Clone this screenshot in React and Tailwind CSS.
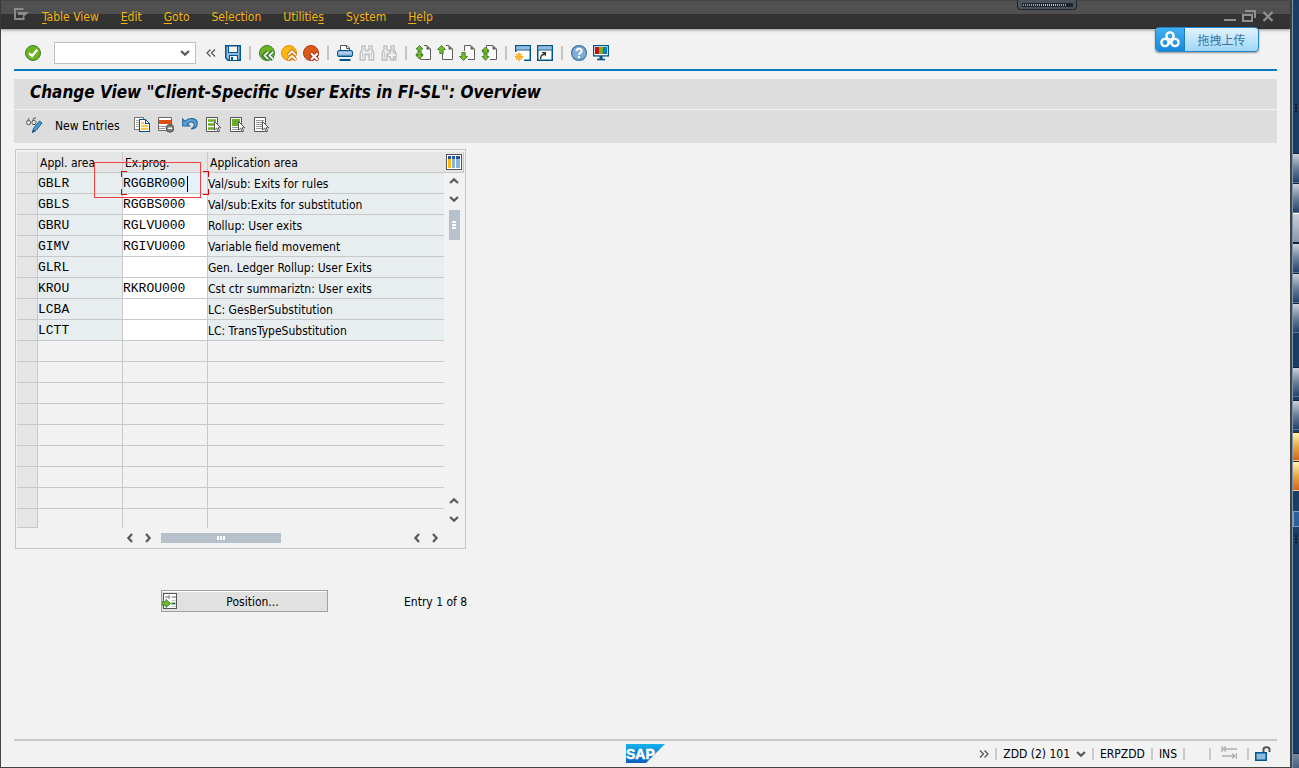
import React from "react";

const Svg = ({ children, w = 16, h = 16, crisp = false }) => (
  <svg
    width={w}
    height={h}
    viewBox={`0 0 ${w} ${h}`}
    fill="none"
    shapeRendering={crisp ? "crispEdges" : "auto"}
    aria-hidden="true"
    className="block shrink-0"
  >
    {children}
  </svg>
);

const Chevron = ({ dir = "down" }) => {
  const paths = {
    down: "M1 3 L5 6.6 L9 3",
    up: "M1 7 L5 3.4 L9 7",
    left: "M7 1 L3.4 5 L7 9",
    right: "M3 1 L6.6 5 L3 9",
  };
  return (
    <Svg w={10} h={10}>
      <path d={paths[dir]} stroke="#5c5c5c" strokeWidth="2.3" />
    </Svg>
  );
};

const DoubleChevron = ({ right = false }) => (
  <Svg w={10} h={8}>
    <path
      d={right ? "M1 .5 L4.5 4 L1 7.5 M5.5 .5 L9 4 L5.5 7.5" : "M4.5 .5 L1 4 L4.5 7.5 M9 .5 L5.5 4 L9 7.5"}
      stroke="#555"
      strokeWidth="1.3"
    />
  </Svg>
);

const OkIcon = () => (
  <Svg>
    <circle cx="8" cy="8" r="7.5" fill="#6fb41f" stroke="#3a7d33" />
    <path d="M4 8.2 L7 11 L12.2 4.8" stroke="#fff" strokeWidth="2.4" />
  </Svg>
);

const SaveIcon = () => (
  <Svg>
    <path d="M.75 .75 H15.25 V15.25 H3 L.75 13 Z" fill="#8fb9de" stroke="#00568c" strokeWidth="1.5" />
    <rect x="3.5" y="1" width="9" height="6.5" fill="#f4f4f4" stroke="#00568c" />
    <rect x="4.5" y="10.5" width="8" height="5" fill="#f4f4f4" stroke="#00568c" />
    <rect x="6" y="12" width="2" height="3" fill="#00568c" />
  </Svg>
);

const BackIcon = () => (
  <Svg>
    <circle cx="8" cy="8" r="7.5" fill="#6fb41f" stroke="#3a7d33" />
    <path d="M9 6.5 L5 10.5 L9 14.5 M14 6.5 L10 10.5 L14 14.5" stroke="#3a7d33" strokeWidth="4" />
    <path d="M9.2 6.8 L5.5 10.5 L9.2 14.2 M14.2 6.8 L10.5 10.5 L14.2 14.2" stroke="#fff" strokeWidth="1.7" />
  </Svg>
);

const ExitIcon = () => (
  <Svg>
    <circle cx="8" cy="8" r="7.5" fill="#fdb913" stroke="#e58a0c" />
    <path d="M7 10 L11 6 L15 10 M7 15 L11 11 L15 15" stroke="#d9730d" strokeWidth="3.6" />
    <path d="M7.2 10 L11 6.3 L14.8 10 M7.2 14.7 L11 11 L14.8 14.7" stroke="#fff" strokeWidth="1.7" />
  </Svg>
);

const CancelIcon = () => (
  <Svg>
    <circle cx="8" cy="8" r="7.5" fill="#dc5a17" stroke="#b5341b" />
    <path d="M7.5 8 L15 15.2 M15 8 L7.5 15.2" stroke="#a52a12" strokeWidth="4" />
    <path d="M8 8.3 L14.6 14.8 M14.6 8.3 L8 14.8" stroke="#fff" strokeWidth="2.1" />
  </Svg>
);

const PrintIcon = () => (
  <Svg>
    <path d="M3.5 6 V.5 H10 L12.5 3 V6" fill="#fff" stroke="#555" />
    <path d="M9.5 .5 V3.5 H12.5" stroke="#555" />
    <rect x=".5" y="5.5" width="15" height="6" rx="1.5" fill="#8fb9de" stroke="#00568c" />
    <path d="M2 8 H14" stroke="#cfe0f0" />
    <path d="M1.5 11.3 H14.5" stroke="#00568c" strokeWidth="1.4" />
    <path d="M2.5 15 H13.5" stroke="#00568c" strokeWidth="2" />
  </Svg>
);

const FindIcon = ({ next = false }) => (
  <Svg>
    <path
      d="M3 .8 H6 V4 L7 5.5 H9 L10 4 V.8 H13 V4 L14.8 8 V15 H10 V9.5 H6 V15 H1.2 V8 L3 4 Z"
      fill="#ebebeb"
      stroke="#bdbdbd"
      strokeWidth="1.3"
    />
    <path d="M3 4 H6 M10 4 H13 M3.6 6.5 V13 M12.4 6.5 V13" stroke="#c9c9c9" />
    {next && (
      <>
        <path d="M11 5.5 V14.5 M6.5 10 H15.5" stroke="#bdbdbd" strokeWidth="4.4" />
        <path d="M11 6.5 V13.5 M7.5 10 H14.8" stroke="#f4f4f4" strokeWidth="2.2" />
      </>
    )}
  </Svg>
);

const GREEN_ARROWS = {
  first: ["M4.5 .5 L8 4 H6 V7 H3 V4 H1 Z", "M4.5 6 L8 9.5 H6 L6 10.5 H8 L4.5 14 L1 10.5 H3 V9.5 H1 Z"],
  prev: ["M4.5 .5 L8.5 4.5 H6.2 V8.5 H2.8 V4.5 H.5 Z"],
  next: ["M4.5 15.5 L8.5 11.5 H6.2 V7.5 H2.8 V11.5 H.5 Z"],
  last: ["M4.5 2 L8 5.5 H6 V6.5 H8 L4.5 9.5 L1 6.5 H3 V5.5 H1 Z", "M4.5 15.3 L8 11.5 H6 V8.5 H3 V11.5 H1 Z"],
};

const PageIcon = ({ kind }) => (
  <Svg>
    <path
      d={kind === "next" || kind === "last" ? "M5.5 6 V.5 H12 L15.5 4 V14.5 H9" : "M9 .5 H12 L15.5 4 V14.5 H5.5 V9"}
      fill="#fbfbfb"
      stroke="#5f5f5f"
    />
    <path d="M11.5 .5 V4.5 H15.5 Z" fill="#5f5f5f" />
    {GREEN_ARROWS[kind].map((d) => (
      <path key={d} d={d} fill="#7dbb22" stroke="#39803a" strokeWidth=".9" />
    ))}
  </Svg>
);

const SessionIcon = () => (
  <Svg>
    <rect x=".75" y=".75" width="14.5" height="14.5" fill="#fff" stroke="#00568c" strokeWidth="1.5" />
    <rect x="1.5" y="1.5" width="13" height="3" fill="#8fb9de" />
    <path d="M1 5 H15" stroke="#00568c" />
    <rect x="0" y="7" width="9" height="9" fill="#fff" />
    <path d="M4 7.5 V16 M0 11.8 H8.3 M1 8.8 L7 14.8 M7 8.8 L1 14.8" stroke="#ef8a10" strokeWidth="1.2" />
    <circle cx="4" cy="11.8" r="2.5" fill="#fdb913" />
  </Svg>
);

const ShortcutIcon = () => (
  <Svg>
    <rect x=".75" y=".75" width="14.5" height="14.5" fill="#fff" stroke="#00568c" strokeWidth="1.5" />
    <rect x="1.5" y="1.5" width="13" height="3" fill="#8fb9de" />
    <path d="M1 5 H15" stroke="#00568c" />
    <path d="M3.8 14 C3.2 11.5 4.5 9.8 7 9.5" stroke="#333" strokeWidth="1.5" />
    <path d="M4.5 7 H9 V11.5 Z" fill="#333" />
  </Svg>
);

const HelpIcon = () => (
  <Svg>
    <circle cx="8" cy="8" r="7.4" fill="#7fadd9" stroke="#3f749f" strokeWidth="1.2" />
    <path d="M5.5 6.2 C5.5 3 10.6 3 10.6 6 C10.6 8 8 7.8 8 10" stroke="#fff" strokeWidth="1.9" />
    <rect x="7" y="11" width="2" height="2" fill="#fff" />
  </Svg>
);

const MonitorIcon = () => (
  <Svg>
    <rect x=".6" y=".6" width="14.8" height="10.3" fill="#fff" stroke="#00568c" strokeWidth="1.3" />
    <rect x="2" y="2" width="4" height="7" fill="#d00d12" />
    <rect x="6" y="2" width="4" height="7" fill="#72b51f" />
    <rect x="10" y="2" width="4" height="7" fill="#0a7dc4" />
    <path d="M8 11 V14" stroke="#00568c" strokeWidth="3" />
    <path d="M4 14.5 H12" stroke="#00568c" strokeWidth="1.6" />
  </Svg>
);

const GlassesPenIcon = () => (
  <Svg w={17}>
    <path d="M1 4 L3.5 1 M6.5 4 L8 1 H10" stroke="#555" />
    <circle cx="2.6" cy="5.6" r="2.1" stroke="#555" fill="#eee" />
    <circle cx="8" cy="5.6" r="2.1" stroke="#555" fill="#eee" />
    <path d="M6.5 15.5 L7.5 11.5 L13.5 4 L16 6 L10 13.5 Z" fill="#4d9bd0" stroke="#0b5f96" />
    <path d="M6 15.8 L7.4 12.6 L9 14.2 Z" fill="#0b4f80" />
  </Svg>
);

const CopyIcon = () => (
  <Svg crisp>
    <rect x=".5" y=".5" width="9" height="12" fill="#fff" stroke="#777" />
    <path d="M2 3.5 H5 M2 5.5 H5 M2 7.5 H5 M2 9.5 H5" stroke="#aaa" />
    <path d="M5.5 2.5 H11.5 L15.5 6.5 V14.5 H5.5 Z" fill="#fff" stroke="#00568c" />
    <path d="M11.5 3 V6.5 H15" stroke="#00568c" />
    <rect x="7" y="5" width="3" height="2" fill="#fdc63c" />
    <rect x="7" y="8" width="7" height="2" fill="#fdc63c" />
    <rect x="7" y="11" width="7" height="2" fill="#fdc63c" />
  </Svg>
);

const DeleteIcon = () => (
  <Svg>
    <path d="M.5 .5 H13.5 V13.5 H.5 Z" fill="#fff" stroke="#666" />
    <rect x="1" y="3" width="12" height="4" fill="#dc5012" />
    <path d="M1 9.5 H8 M1 11.5 H7" stroke="#999" />
    <circle cx="12" cy="11.3" r="3.9" fill="#777" stroke="#555" />
    <path d="M9.8 11.3 H14.2" stroke="#fff" strokeWidth="1.6" />
  </Svg>
);

const UndoIcon = () => (
  <Svg>
    <path
      d="M.7 2 V9 H7.5 L5.3 6.7 C8 4 12.4 4.6 12.4 7.8 C12.4 9.8 11 11 9.2 11.9 C12.9 11.8 15.3 9.6 15.3 6.5 C15.3 1 7.5 -.3 3 4.4 Z"
      fill="#5fa3d3"
      stroke="#1d699f"
      strokeWidth="1.1"
    />
  </Svg>
);

const SelectIcon = ({ kind }) => (
  <Svg>
    <path d="M.5 .5 H11.5 V14.5 H.5 Z" fill="#fff" stroke="#555" />
    {kind === "all" && (
      <path d="M2 3.5 H10 M2 7.5 H10 M2 11.5 H9" stroke="#69af20" strokeWidth="2.6" />
    )}
    {kind === "block" && (
      <>
        <rect x="2" y="2" width="8" height="7" fill="#69af20" />
        <path d="M2 10.5 H8 M2 12.5 H8" stroke="#999" />
      </>
    )}
    {kind === "none" && (
      <path d="M2 3.5 H10 M2 5.5 H10 M2 7.5 H8 M2 9.5 H8 M2 11.5 H8" stroke="#999" />
    )}
    <path d="M8.5 4.5 V13 L10.6 11.2 L12.2 15 L13.6 14.3 L12 10.8 H14.8 Z" fill="#fff" stroke="#555" />
  </Svg>
);

const ColumnsIcon = () => (
  <Svg crisp>
    <rect x=".5" y=".5" width="15" height="15" fill="#fff" stroke="#555" />
    <rect x="2" y="2" width="3" height="3" fill="#23539a" />
    <rect x="6" y="2" width="3" height="3" fill="#23539a" />
    <rect x="10" y="2" width="4" height="3" fill="#23539a" />
    <rect x="2" y="5" width="3" height="9" fill="#fdbb12" />
    <rect x="6" y="5" width="3" height="9" fill="#8fb4dc" />
    <rect x="10" y="5" width="4" height="9" fill="#8fb4dc" />
  </Svg>
);

const PositionIcon = () => (
  <Svg>
    <rect x="1.5" y=".5" width="13" height="15" fill="#fff" stroke="#555" />
    <path d="M3 4 H8 M7 2 V6 M9.5 4 H14" stroke="#999" strokeWidth="1.3" />
    <path d="M9.5 7.5 H14 M9.5 13.5 H14" stroke="#ccc" />
    <path d="M9.5 10.5 H13.5" stroke="#2f7d35" strokeWidth="2" />
    <path d="M0 8.8 H4 V6.5 L8.5 10.5 L4 14.5 V12.2 H0 Z" fill="#7dbb22" stroke="#39803a" />
  </Svg>
);

const SapLogo = () => (
  <svg width="39" height="19" viewBox="0 0 39 19" role="img" aria-label="SAP" className="mb-0.5 block">
    <defs>
      <linearGradient id="sap" x1="0" y1="0" x2="0" y2="1">
        <stop offset="0" stopColor="#16b0ee" />
        <stop offset="1" stopColor="#0a5fbb" />
      </linearGradient>
    </defs>
    <path d="M0 0 H39 L20 19 H0 Z" fill="url(#sap)" />
    <text x="0" y="15" fill="#fff" stroke="#fff" strokeWidth=".5" fontFamily="Liberation Sans, sans-serif" fontWeight="700" fontSize="14">
      SAP
    </text>
  </svg>
);

const Sep = () => <span className="mx-0.5 h-3.5 w-0.5 bg-[#c4c4c4]" />;

const StatusSep = () => <span className="block h-3 w-0.5 bg-[#cacaca]" />;

const IconButton = ({ label, children }) => (
  <button type="button" aria-label={label} className="block shrink-0">
    {children}
  </button>
);

const menus = [
  ["", "T", "able View"],
  ["", "E", "dit"],
  ["", "G", "oto"],
  ["Se", "l", "ection"],
  ["Utilitie", "s", ""],
  ["S", "y", "stem"],
  ["", "H", "elp"],
];

const rows = [
  ["GBLR", "RGGBR000", "Val/sub: Exits for rules"],
  ["GBLS", "RGGBS000", "Val/sub:Exits for substitution"],
  ["GBRU", "RGLVU000", "Rollup: User exits"],
  ["GIMV", "RGIVU000", "Variable field movement"],
  ["GLRL", "", "Gen. Ledger Rollup: User Exits"],
  ["KROU", "RKROU000", "Cst ctr summariztn: User exits"],
  ["LCBA", "", "LC: GesBerSubstitution"],
  ["LCTT", "", "LC: TransTypeSubstitution"],
];

const MenuBar = () => (
  <header className="flex h-[29px] items-center border-t border-b border-t-[#444] border-b-[#2c2c2c] bg-linear-to-b from-[#505050] from-50% to-[#333] to-50% pr-4 pl-[13px] shadow-[0_1px_3px_#0006]">
    <button type="button" aria-label="System menu">
      <Svg>
        <path d="M9.5 2 H1 V12 H9.5 V10" stroke="#8b8b8b" strokeWidth="2" />
        <path d="M4 5 H15 L9 10.5 V8 H4 Z" fill="#8b8b8b" />
      </Svg>
    </button>
    <nav className="ml-3 flex gap-[22px] pt-1 text-[#f4b50f]">
      {menus.map(([a, u, b]) => (
        <button type="button" key={a + u + b} className="leading-4">
          {a}
          <span className="underline underline-offset-2">{u}</span>
          {b}
        </button>
      ))}
    </nav>
    <div className="ml-auto flex items-center gap-1.5 pt-1">
      <IconButton label="Minimize">
        <Svg w={13} h={13} crisp>
          <rect x="1" y="9" width="12" height="2" fill="#909090" />
        </Svg>
      </IconButton>
      <IconButton label="Restore">
        <Svg w={14} h={13} crisp>
          <path d="M3 1 H13 V8" stroke="#909090" strokeWidth="2" />
          <rect x="1" y="5" width="9" height="6" stroke="#909090" strokeWidth="2" />
        </Svg>
      </IconButton>
      <IconButton label="Close">
        <Svg w={12} h={13}>
          <path d="M1.5 2 L10.5 11 M10.5 2 L1.5 11" stroke="#909090" strokeWidth="2.2" />
        </Svg>
      </IconButton>
    </div>
  </header>
);

const Toolbar = () => (
  <div className="flex h-[42px] items-center gap-1.5 border-b-2 border-[#0a7bbf] pt-2 pl-[11px]">
    <IconButton label="Enter"><OkIcon /></IconButton>
    <div className="relative ml-[7px] flex">
      <input
        aria-label="Command"
        className="h-[22px] w-[142px] border border-[#bfbfbf] bg-white px-1 outline-none"
      />
      <button type="button" aria-label="Command history" className="absolute top-1.5 right-1.5">
        <Chevron />
      </button>
    </div>
    <span className="mr-[3px] ml-1"><IconButton label="Collapse"><DoubleChevron /></IconButton></span>
    <IconButton label="Save"><SaveIcon /></IconButton>
    <Sep />
    <IconButton label="Back"><BackIcon /></IconButton>
    <IconButton label="Exit"><ExitIcon /></IconButton>
    <IconButton label="Cancel"><CancelIcon /></IconButton>
    <Sep />
    <IconButton label="Print"><PrintIcon /></IconButton>
    <IconButton label="Find"><FindIcon /></IconButton>
    <IconButton label="Find next"><FindIcon next /></IconButton>
    <Sep />
    <IconButton label="First page"><PageIcon kind="first" /></IconButton>
    <IconButton label="Previous page"><PageIcon kind="prev" /></IconButton>
    <IconButton label="Next page"><PageIcon kind="next" /></IconButton>
    <IconButton label="Last page"><PageIcon kind="last" /></IconButton>
    <Sep />
    <IconButton label="New session"><SessionIcon /></IconButton>
    <IconButton label="Create shortcut"><ShortcutIcon /></IconButton>
    <Sep />
    <IconButton label="Help"><HelpIcon /></IconButton>
    <IconButton label="Customize layout"><MonitorIcon /></IconButton>
  </div>
);

const FocusFrame = () => (
  <div className="pointer-events-none absolute inset-0 z-10">
    <span className="absolute -top-0.5 -left-0.5 h-1.5 w-1.5 border-t border-l border-[#e00000]" />
    <span className="absolute -top-0.5 -right-0.5 h-1.5 w-1.5 border-t border-r border-[#e00000]" />
    <span className="absolute -bottom-0.5 -left-0.5 h-1.5 w-1.5 border-b border-l border-[#e00000]" />
    <span className="absolute -right-0.5 -bottom-0.5 h-1.5 w-1.5 border-r border-b border-[#e00000]" />
    <span className="absolute top-[3px] left-[64px] h-4 w-px bg-black" />
    <span className="absolute -top-[11px] -left-[29px] h-9 w-[107px] border border-[#f04040]" />
  </div>
);

const line = "border-[#c8c8c8]";

const Grid = () => (
  <section className={`w-[451px] border ${line} px-px pt-0.5`}>
    <div className="flex">
      <table className="w-[427px] table-fixed border-separate border-spacing-0">
        <colgroup>
          <col className="w-[21px]" />
          <col className="w-[85px]" />
          <col className="w-[85px]" />
          <col />
        </colgroup>
        <thead>
          <tr className="h-[21px] bg-[#e5e5e5] text-left leading-4">
            <th aria-label="Select" className={`border-r border-b p-0 ${line}`} />
            <th className={`border-r border-b p-0 pt-0.5 pl-0.5 font-normal ${line}`}>Appl. area</th>
            <th className={`border-r border-b p-0 pt-0.5 pl-0.5 font-normal ${line}`}>Ex.prog.</th>
            <th className={`border-b p-0 pt-0.5 pl-0.5 font-normal ${line}`}>Application area</th>
          </tr>
        </thead>
        <tbody className="leading-4">
          {rows.map(([area, prog, text], i) => (
            <tr key={area} className="h-[21px]">
              <td className={`border-r border-b bg-[#e5e5e5] p-0 ${line}`} />
              <td className={`border-r border-b bg-[#e8edf0] p-0 pt-0.5 font-['Liberation_Mono',monospace] text-[13px] ${line}`}>
                {area}
              </td>
              <td className={`relative border-r border-b p-0 ${line}`}>
                <input
                  aria-label={`Ex.prog. ${area}`}
                  defaultValue={prog}
                  className={`block h-5 w-full font-['Liberation_Mono',monospace] text-[13px] outline-none ${i === 0 ? "bg-[#e5f2fb]" : "bg-white"}`}
                />
                {i === 0 && <FocusFrame />}
              </td>
              <td className={`border-b bg-[#e8edf0] p-0 pt-0.5 whitespace-nowrap ${line}`}>{text}</td>
            </tr>
          ))}
          {Array.from({ length: 8 }, (_, i) => (
            <tr key={i} className="h-[21px]">
              <td className={`border-r border-b bg-[#e5e5e5] p-0 ${line}`} />
              <td className={`border-r border-b p-0 ${line}`} />
              <td className={`border-r border-b p-0 ${line}`} />
              <td className={`border-b p-0 ${line}`} />
            </tr>
          ))}
          <tr className="h-[19px]">
            <td className={`border-r border-b bg-[#e5e5e5] p-0 ${line}`} />
            <td className={`border-r p-0 ${line}`} />
            <td className={`border-r p-0 ${line}`} />
            <td className="p-0" />
          </tr>
        </tbody>
      </table>
      <div className="flex flex-1 flex-col items-center">
        <div className={`flex h-[21px] w-full items-center justify-center border-r border-b bg-[#e5e5e5] ${line}`}>
          <IconButton label="Table settings"><ColumnsIcon /></IconButton>
        </div>
        <div className="flex flex-1 flex-col items-center pt-[3px] pb-1">
          <IconButton label="Scroll up"><Chevron dir="up" /></IconButton>
          <span className="mt-2"><IconButton label="Scroll down"><Chevron /></IconButton></span>
          <div className="mt-1.5 flex h-[30px] w-[11px] flex-col items-center justify-center gap-px bg-[#b6c1cb]">
            <span className="h-0.5 w-1 bg-white" />
            <span className="h-0.5 w-1 bg-white" />
            <span className="h-0.5 w-1 bg-white" />
          </div>
          <span className="mt-auto"><IconButton label="Previous row"><Chevron dir="up" /></IconButton></span>
          <span className="mt-2"><IconButton label="Next row"><Chevron /></IconButton></span>
        </div>
      </div>
    </div>
    <div className="flex h-5 items-center gap-2 pr-6 pl-[108px]">
      <IconButton label="Scroll left"><Chevron dir="left" /></IconButton>
      <IconButton label="Scroll right"><Chevron dir="right" /></IconButton>
      <div className="flex h-2.5 w-[120px] items-center justify-center gap-px bg-[#b6c1cb]">
        <span className="h-1 w-0.5 bg-white" />
        <span className="h-1 w-0.5 bg-white" />
        <span className="h-1 w-0.5 bg-white" />
      </div>
      <span className="ml-auto"><IconButton label="Previous column"><Chevron dir="left" /></IconButton></span>
      <IconButton label="Next column"><Chevron dir="right" /></IconButton>
    </div>
  </section>
);

const StatusBar = () => (
  <footer className="mx-[13px] grid h-7 grid-cols-[1fr_auto_1fr] items-center border-t-2 border-[#c8c8c8]">
    <span />
    <SapLogo />
    <div className="flex items-center justify-end gap-1.5 pr-1.5">
      <IconButton label="Expand status"><DoubleChevron right /></IconButton>
      <StatusSep />
      <span className="whitespace-nowrap">ZDD (2) 101</span>
      <IconButton label="System information"><Chevron /></IconButton>
      <StatusSep />
      <span>ERPZDD</span>
      <StatusSep />
      <span>INS</span>
      <StatusSep />
      <span className="ml-4.5"><StatusSep /></span>
      <span className="mx-1">
        <Svg>
          <path d="M1 0 V6 M2 3 H16 M5 .5 L2 3 L5 5.5 M15.5 7 V13 M1 10 H14 M11 7.5 L14 10 L11 12.5" stroke="#b0b0b0" strokeWidth="1.3" />
        </Svg>
      </span>
      <StatusSep />
      <Svg>
        <path d="M8.5 6 V3.5 C8.5 .5 14.5 .5 14.5 3.5 V6" stroke="#555" strokeWidth="2" />
        <rect x=".75" y="6.75" width="10.5" height="7.5" fill="#8fb9de" stroke="#00568c" strokeWidth="1.5" />
      </Svg>
    </div>
  </footer>
);

const glass = "border-y border-t-[#10233c] border-b-[#5f7690] bg-linear-to-b from-[#cdd2da] via-[#6b819c] to-[#24446d]";
const gold = "border-y border-t-[#3a2a18] border-b-[#f3cfa0] bg-linear-to-b from-[#fdf6b0] via-[#e6a93f] to-[#d3641d]";

const Dots = () => (
  <div className="ml-auto flex w-1 flex-col gap-px">
    <span className="h-0.5 w-0.5 bg-[#0c1a2c]" />
    <span className="h-0.5 w-0.5 bg-[#0c1a2c]" />
    <span className="h-0.5 w-0.5 bg-[#0c1a2c]" />
  </div>
);

const Taskbar = () => (
  <aside className="flex w-[7px] shrink-0 flex-col border-l border-[#7f95ab] bg-[#1b3d66]">
    <div className="h-[153px] pt-[104px]"><Dots /></div>
    <div className={`h-[30px] ${glass}`} />
    <div className={`h-[30px] ${glass}`} />
    <div className="h-[30px] border-y border-t-white border-b-[#10233c] bg-linear-to-b from-[#ccd1d9] to-[#8796ad]" />
    <div className={`h-[30px] ${glass}`} />
    <div className={`h-[30px] ${glass}`} />
    <div className={`h-[30px] ${glass}`} />
    <div className="h-[34px]" />
    <div className={`h-[30px] ${glass}`} />
    <div className={`mt-[3px] h-[30px] ${glass}`} />
    <div className={`mt-0.5 h-[29px] ${gold}`} />
    <div className={`h-[30px] ${gold}`} />
    <div className="mt-5 h-4 border border-r-0 border-[#7f9fc4] bg-[#2d5f9c]" />
    <div className="flex-1 pt-2"><Dots /></div>
    <div className="h-[15px] border-t border-[#10233c] bg-linear-to-b from-[#7a8ba3] to-[#46607f]" />
  </aside>
);

export default function App() {
  return (
    <div className="flex min-h-screen bg-[#1b3d66] font-['DejaVu_Sans_Condensed','DejaVu_Sans',sans-serif] text-[12px] text-black">
      <div className="relative flex min-w-0 flex-1 flex-col border-r-2 border-b border-l border-[#444] bg-[#f2f2f2]">
        <MenuBar />
        <main className="mx-[13px] flex flex-1 flex-col">
          <Toolbar />
          <h1 className="mt-2 flex h-[30px] items-center bg-[#dddddd] pb-1 pl-4 text-[17px] leading-5 font-bold whitespace-nowrap italic">
            Change View "Client-Specific User Exits in FI-SL": Overview
          </h1>
          <div className="mt-px flex h-[33px] items-center gap-2 bg-[#dddddd] pb-1 pl-3">
            <IconButton label="Display/Change"><GlassesPenIcon /></IconButton>
            <button type="button" className="mr-1.5 ml-1 pt-0.5 leading-4 whitespace-nowrap">New Entries</button>
            <IconButton label="Copy as"><CopyIcon /></IconButton>
            <IconButton label="Delete"><DeleteIcon /></IconButton>
            <IconButton label="Undo change"><UndoIcon /></IconButton>
            <IconButton label="Select all"><SelectIcon kind="all" /></IconButton>
            <IconButton label="Select block"><SelectIcon kind="block" /></IconButton>
            <IconButton label="Deselect all"><SelectIcon kind="none" /></IconButton>
          </div>
          <div className="mt-1.5 ml-px">
            <Grid />
          </div>
          <div className="mt-[41px] flex items-center pl-[147px]">
            <button
              type="button"
              className="flex h-[22px] w-[167px] items-center border border-[#a0a0a0] bg-[#e1e1e1] shadow-[inset_0_1px_0_#fff]"
            >
              <PositionIcon />
              <span className="flex-1 pt-0.5">Position...</span>
            </button>
            <span className="ml-[76px] pt-0.5">Entry 1 of 8</span>
          </div>
        </main>
        <StatusBar />

        <div className="absolute top-0 right-[213px] flex h-2.5 w-[60px] justify-center rounded-b-sm border border-t-0 border-[#22262b] bg-[#4b535c] pt-[3px]">
          <span className="flex h-1 w-[51px] items-center bg-[#1d242b] px-px">
            <span className="h-0.5 w-[43px] bg-[repeating-linear-gradient(90deg,transparent_0_1px,#1d242b_1px_2px),linear-gradient(90deg,#3fa8e8,#6cc8d0,#e8d048,#d08a30)]" />
          </span>
        </div>

        <button
          type="button"
          className="absolute top-[27px] right-[31px] flex h-[25px] w-[104px] overflow-hidden rounded-sm border border-[#2585c7] bg-linear-to-b from-[#e2f3fd] to-[#9ed7f7] shadow-[0_1px_2px_#0006]"
        >
          <span className="flex h-full w-[29px] items-center justify-center border-r border-[#1c7cc0] bg-linear-to-b from-[#3fb0f2] to-[#1488dc]">
            <Svg w={20} h={17}>
              <circle cx="10" cy="5" r="3.6" stroke="#fff" strokeWidth="2.4" />
              <circle cx="5" cy="11.5" r="3.6" stroke="#fff" strokeWidth="2.4" />
              <circle cx="15" cy="11.5" r="3.6" stroke="#fff" strokeWidth="2.4" />
              <path d="M7.5 14 L12.5 9" stroke="#fff" strokeWidth="2.4" />
            </Svg>
          </span>
          <span className="flex-1 pt-1 font-['Noto_Sans_CJK_SC',sans-serif] text-[12px] leading-4 text-[#3a749f]">
            拖拽上传
          </span>
        </button>
      </div>
      <Taskbar />
    </div>
  );
}
